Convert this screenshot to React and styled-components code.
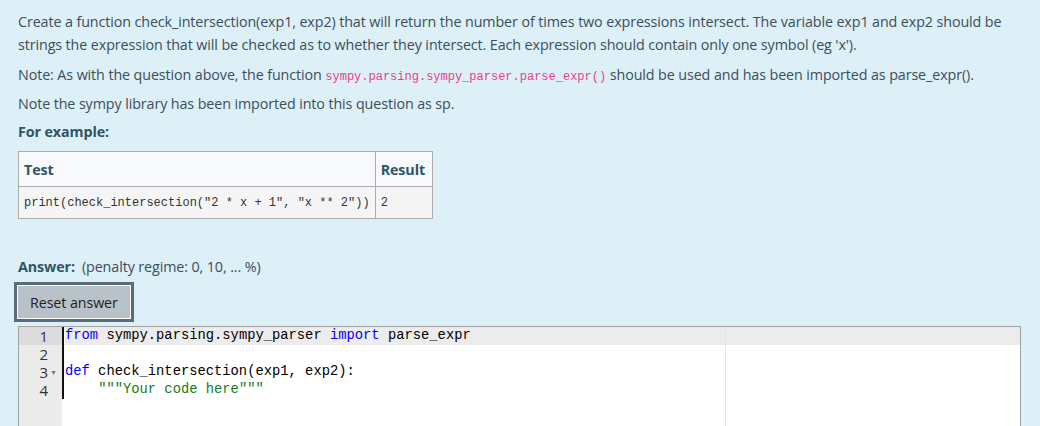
import React from 'react';
import styled, { createGlobalStyle } from 'styled-components';

const GlobalStyle = createGlobalStyle`
  body {
    margin: 0;
    background: #def0f7;
    font-family: "Open Sans", "Noto Sans", sans-serif;
    color: #3b4e5b;
  }
`;

const Page = styled.div`
  padding: 10px 19px 0 18px;
  font-size: 14.3px;
  letter-spacing: -0.1px;
`;

const Para = styled.p`
  margin: 0 0 ${(props) => props.gap || 7}px;
  line-height: 23px;
`;

const InlineCode = styled.code`
  font-family: "Liberation Mono", "DejaVu Sans Mono", monospace;
  font-size: 12px;
  line-height: 1;
  letter-spacing: 0;
  color: #e83e8c;
`;

const Heading = styled.div`
  font-weight: 700;
  color: #2f5563;
  line-height: 23px;
  margin-bottom: ${(props) => props.gap || 0}px;
`;

const Table = styled.table`
  border-collapse: collapse;
  margin-bottom: 36px;
  margin-top: 1px;

  th,
  td {
    border: 1px solid #acacac;
    text-align: left;
  }

  th {
    background: #f7f9fd;
    color: #2f5563;
    font-weight: 700;
    height: 34px;
    padding: 0 7px 0 5px;
  }

  td {
    background: #f5f5f5;
    height: 31px;
    padding: 0 5px;
    font-family: "Liberation Mono", "DejaVu Sans Mono", monospace;
    font-size: 12px;
    letter-spacing: 0;
    color: #333;
  }
`;

const Penalty = styled.span`
  font-weight: 400;
  color: #3b4e5b;
  margin-left: 7px;
`;

const ResetButton = styled.button`
  display: block;
  font-family: inherit;
  font-size: 14.3px;
  letter-spacing: -0.1px;
  color: #222;
  background: #b9c1c9;
  border: 1px solid #fff;
  outline: 3px solid #5c6b79;
  outline-offset: 0;
  padding: 0 12px;
  height: 34px;
  margin: 7px 0 7px -1px;
`;

const Editor = styled.div`
  display: flex;
  border: 1px solid #a2a2a2;
  border-bottom: none;
  background: #fff;
  height: 110px;
  font-family: "Liberation Mono", "DejaVu Sans Mono", monospace;
  font-size: 13.8px;
  letter-spacing: 0;
`;

const Gutter = styled.div`
  width: 43px;
  background: #ebebeb;
  color: #333;
  flex-shrink: 0;
  font-family: "Open Sans", sans-serif;
  font-size: 15px;
`;

const GutterCell = styled.div`
  height: 18px;
  line-height: 18px;
  display: flex;
  justify-content: flex-end;
  padding-right: ${(props) => (props.fold ? 3 : 14)}px;
  background: ${(props) => (props.active ? '#dcdcdc' : 'transparent')};
`;

const Fold = styled.span`
  font-size: 7px;
  color: #777;
  width: 11px;
  text-align: center;
  padding-top: 1px;
`;

const Content = styled.div`
  flex: 1;
  position: relative;
`;

const Lines = styled.div`
  border-left: 2px solid #111;
  padding-left: 1px;
`;

const Line = styled.div`
  height: 18px;
  line-height: 18px;
  white-space: pre;
  color: #000;
  background: ${(props) => (props.active ? '#ececec' : 'transparent')};
`;

const Kw = styled.span`
  color: #0000ff;
`;

const Str = styled.span`
  color: #1a7a1a;
`;

const PrintMargin = styled.div`
  position: absolute;
  top: 0;
  bottom: 0;
  left: 663px;
  width: 1px;
  background: #e6e6e6;
`;

export default function App() {
  return (
    <Page>
      <GlobalStyle />
      <Para gap={7}>
        Create a function check_intersection(exp1, exp2) that will return the number of times two expressions
        intersect. The variable exp1 and exp2 should be strings the expression that will be checked as to whether
        they intersect. Each expression should contain only one symbol (eg 'x').
      </Para>
      <Para gap={6}>
        Note: As with the question above, the function <InlineCode>sympy.parsing.sympy_parser.parse_expr()</InlineCode>{' '}
        should be used and has been imported as parse_expr().
      </Para>
      <Para gap={5}>Note the sympy library has been imported into this question as sp.</Para>
      <Heading gap={8}>For example:</Heading>
      <Table>
        <thead>
          <tr>
            <th>Test</th>
            <th>Result</th>
          </tr>
        </thead>
        <tbody>
          <tr>
            <td>print(check_intersection("2 * x + 1", "x ** 2"))</td>
            <td>2</td>
          </tr>
        </tbody>
      </Table>
      <Heading>
        Answer:<Penalty>(penalty regime: 0, 10, ... %)</Penalty>
      </Heading>
      <ResetButton>Reset answer</ResetButton>
      <Editor>
        <Gutter>
          <GutterCell active>1</GutterCell>
          <GutterCell>2</GutterCell>
          <GutterCell fold>
            3<Fold>▼</Fold>
          </GutterCell>
          <GutterCell>4</GutterCell>
        </Gutter>
        <Content>
          <PrintMargin />
          <Lines>
            <Line active>
              <Kw>from</Kw> sympy.parsing.sympy_parser <Kw>import</Kw> parse_expr
            </Line>
            <Line> </Line>
            <Line>
              <Kw>def</Kw> check_intersection(exp1, exp2):
            </Line>
            <Line>
              {'    '}
              <Str>"""Your code here"""</Str>
            </Line>
          </Lines>
        </Content>
      </Editor>
    </Page>
  );
}
